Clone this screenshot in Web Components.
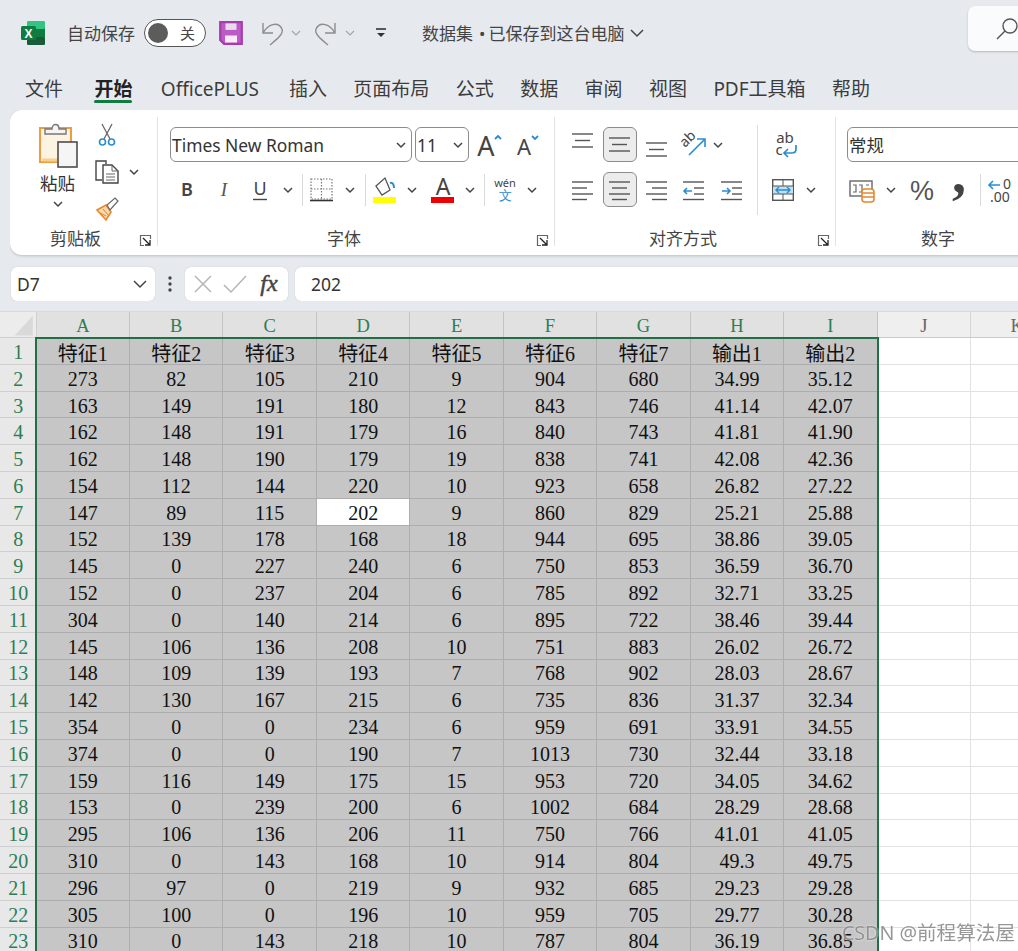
<!DOCTYPE html>
<html lang="zh">
<head>
<meta charset="utf-8">
<title>数据集</title>
<style>
  html, body { margin: 0; height: 951px; overflow: hidden; background: #e6eaee; }
  body { font-family: "Noto Sans", "Noto Sans CJK SC", sans-serif; color: #333; }
</style>
</head>
<body>
<xl-titlebar></xl-titlebar>
<xl-tabs></xl-tabs>
<xl-ribbon></xl-ribbon>
<xl-formula name="D7" value="202"></xl-formula>
<xl-sheet></xl-sheet>
<xl-watermark>CSDN @前程算法屋</xl-watermark>

<script>
const UI = `"Noto Sans", "Noto Sans CJK SC", sans-serif`;
const BLUE = '#2b8ccf';
const svg = (w, h, inner) => `<svg width="${w}" height="${h}" viewBox="0 0 ${w} ${h}" fill="none" stroke="#555" stroke-width="1.4" style="display:block;overflow:visible">${inner}</svg>`;
const hl = (x1, x2, y, c) => `<path d="M${x1} ${y}H${x2}" ${c ? `stroke="${c}"` : ''}/>`;
const txt = (x, y, size, s, extra = '') => `<text x="${x}" y="${y}" font-size="${size}" text-anchor="middle" fill="#444" stroke="none" font-family='"Noto Sans", sans-serif' ${extra}>${s}</text>`;

// 功能区里用到的图标
const ICONS = {
  chev: () => svg(10, 6, `<path d="M1 1l4 4 4-4" stroke="#444" stroke-width="1.5"/>`),
  chevL: () => svg(10, 6, `<path d="M1 1l4 4 4-4" stroke="#a5a5a5" stroke-width="1.2"/>`),
  logo: () => svg(24, 24, `<g stroke="none"><rect x="6" y="0" width="18" height="24" rx="2" fill="#21a366"/><rect x="6" y="0" width="18" height="8" rx="2" fill="#33c481"/><rect x="15" y="8" width="9" height="8" fill="#107c41"/><rect x="6" y="16" width="18" height="8" rx="1.5" fill="#185c37"/><rect x="0" y="5" width="15" height="14" rx="1.5" fill="#107c41"/></g>
    <text x="7.5" y="16.5" font-size="12" font-weight="700" text-anchor="middle" fill="#fff" stroke="none" font-family="Liberation Sans, sans-serif">X</text>`),
  save: () => svg(24, 24, `<path d="M1.2 1.2H22.8V22.8H5L1.2 19Z" fill="#bb5cc4" stroke="#a63cb0" stroke-width="2.2"/>
    <rect x="6.5" y="2.4" width="11" height="6.5" fill="#e9dcec" stroke="none"/>
    <rect x="6" y="14.5" width="12" height="7" fill="#fbeafb" stroke="none"/>`),
  undo: () => svg(24, 24, `<path d="M3 2V12H13M3 12C8 3 18 0 22 8C24 13 16 19 10 24" stroke="#8c8c8c" stroke-width="1.4"/>`),
  redo: () => svg(24, 24, `<path d="M21 2V12H11M21 12C16 3 6 0 2 8C0 13 8 19 14 24" stroke="#8c8c8c" stroke-width="1.4"/>`),
  custom: () => svg(10, 10, `<path d="M0 1H10" stroke="#333" stroke-width="1.6"/><path d="M1 5H9L5 9Z" fill="#333" stroke="none"/>`),
  search: () => svg(22, 24, `<circle cx="14" cy="9" r="7" stroke="#555"/><path d="M9 14L1 22" stroke="#555"/>`),
  paste: () => svg(42, 44, `<path d="M3 6H34V40H3Z" fill="#fdf3e3" stroke="#ef9d3c" stroke-width="2"/><path d="M5 38H32" stroke="#f8cf93" stroke-width="3"/>
    <path d="M8 12V7H15C15 1 22 1 22 7H29V12Z" fill="#f4f4f4" stroke="#777" stroke-width="1.4"/>
    <rect x="21" y="20" width="19" height="25" fill="#f5f5f5" stroke="#4d4d4d" stroke-width="1.6"/>`),
  cut: () => svg(18, 24, `<path d="M4 1L12 16M14 1L6 16" stroke="#666" stroke-width="1.3"/><circle cx="4.5" cy="19" r="3" stroke="${BLUE}" stroke-width="1.6"/><circle cx="13.5" cy="19" r="3" stroke="${BLUE}" stroke-width="1.6"/>`),
  copy: () => svg(24, 24, `<path d="M7 20H1V1H11V4" stroke="#444"/><path d="M8 5H17L23 11V23H8Z" fill="#fff" stroke="#444"/><path d="M17 5V11H23M11 14H20M11 17H20M11 20H20" stroke="#666" stroke-width="1"/>`),
  brush: () => svg(24, 24, `<path d="M2 13L11 8L16 15L11 23Z" fill="#f6d7ae" stroke="#e8872c" stroke-width="1.6"/><path d="M5 16L11 19M8 12L13 18" stroke="#e8872c" stroke-width="1"/><path d="M12 8L15 13L23 4L20 1Z" fill="#fff" stroke="#666" stroke-width="1.2"/>`),
  launcher: () => svg(11, 11, `<path d="M10.5 4V.5H.5V10.5H4" stroke="#666" stroke-width="1.2"/><path d="M3 3L10 10M10 5V10H5" stroke="#222" stroke-width="1.3"/>`),
  grow: () => svg(26, 26, txt(10, 24, 27, 'A') + `<path d="M19 7L22 4 25 7" stroke="${BLUE}" stroke-width="1.8"/>`),
  shrink: () => svg(24, 22, txt(9, 21, 22, 'A') + `<path d="M17 2L20 5 23 2" stroke="${BLUE}" stroke-width="1.8"/>`),
  bold: () => svg(14, 20, txt(7, 16, 18, 'B', 'font-weight="600"')),
  ital: () => svg(14, 20, `<text x="7" y="16" font-size="19" text-anchor="middle" fill="#555" stroke="none" font-style="italic" font-family="Liberation Serif, serif">I</text>`),
  under: () => svg(16, 22, txt(8, 16, 18, 'U') + hl(1, 15, 20.5, '#444')),
  borders: () => svg(24, 24, `<rect x="1" y="1" width="21" height="20" stroke="#777" stroke-dasharray="1.5 1.5" stroke-width="1.2"/><path d="M11.5 1V21M1 11H22" stroke="#777" stroke-dasharray="1.5 1.5" stroke-width="1.2"/><path d="M0 22.5H23" stroke="#333" stroke-width="1.6"/>`),
  fill: () => svg(24, 26, `<path d="M4 10L13 2L18 14L10 19Z" fill="#fff" stroke="#555" stroke-width="1.3" transform="translate(-1 -1)"/><path d="M17 6C20 5 21 8 21 11" stroke="${BLUE}" stroke-width="2"/><rect x="0" y="20" width="23" height="6" fill="#ffff00" stroke="none"/>`),
  color: () => svg(24, 26, txt(12, 18, 23, 'A') + `<rect x="0" y="20" width="23" height="6" fill="#f00000" stroke="none"/>`),
  wen: () => svg(24, 26, txt(12, 10, 11, 'wén', 'fill="#666"') + txt(12, 23, 13, '文', `style="fill:${BLUE}"`)),
  vtop: () => svg(22, 35, hl(0, 21, 7) + hl(3, 18, 13.5) + hl(0, 21, 20)),
  vmid: () => svg(22, 35, hl(0, 21, 11) + hl(3, 18, 17.5) + hl(0, 21, 24)),
  vbot: () => svg(22, 35, hl(0, 21, 16) + hl(3, 18, 22.5) + hl(0, 21, 29)),
  left: () => svg(22, 20, hl(0, 21, 2) + hl(0, 15, 8) + hl(0, 21, 14) + hl(0, 15, 19.5)),
  center: () => svg(22, 20, hl(0, 21, 2) + hl(3, 18, 8) + hl(0, 21, 14) + hl(3, 18, 19.5)),
  right: () => svg(22, 20, hl(0, 21, 2) + hl(6, 21, 8) + hl(0, 21, 14) + hl(6, 21, 19.5)),
  outdent: () => svg(22, 20, hl(0, 21, 2) + hl(11, 21, 8) + hl(11, 21, 14) + hl(0, 21, 19.5) + `<path d="M9 11H1M4 8L1 11 4 14" stroke="${BLUE}" stroke-width="1.6"/>`),
  indent: () => svg(22, 20, hl(0, 21, 2) + hl(11, 21, 8) + hl(11, 21, 14) + hl(0, 21, 19.5) + `<path d="M1 11H9M6 8L9 11 6 14" stroke="${BLUE}" stroke-width="1.6"/>`),
  orient: () => svg(24, 24, `<text x="0" y="0" font-size="14" fill="#444" stroke="none" font-family='"Noto Sans", sans-serif' transform="translate(3 15) rotate(-45)">ab</text><path d="M7 22L22 7M15 6H23V14" stroke="${BLUE}" stroke-width="1.6"/>`),
  wrap: () => svg(24, 26, txt(12, 11, 15, 'ab') + txt(6, 23, 15, 'c') + `<path d="M23 13V17C23 20 21 21 19 21H11M15 17L11 21 15 25" stroke="${BLUE}" stroke-width="1.7"/>`),
  merge: () => svg(22, 22, `<rect x=".7" y=".7" width="20.6" height="20.6" fill="#fff" stroke="#555"/><rect x="1" y="7" width="20" height="8" fill="#bfe0f5" stroke="none"/><path d="M1 7H21M1 15H21M11 1V7M11 15V21" stroke="#555" stroke-width="1"/><path d="M4 11H18M7 8L4 11 7 14M15 8L18 11 15 14" stroke="${BLUE}" stroke-width="1.4"/>`),
  account: () => svg(26, 24, `<rect x="1" y="3" width="22" height="15" fill="#fff" stroke="#666" stroke-width="1.4"/><path d="M4 7H7V14H4M10 7H13V14H10M17 7H20" stroke="#666" stroke-width="1.2"/><rect x="13" y="11" width="12" height="13" rx="3" fill="#fff" stroke="#e8872c" stroke-width="1.6"/><path d="M13 15H25M13 19H25" stroke="#e8872c" stroke-width="1.4"/>`),
  percent: () => svg(24, 24, `<text x="12" y="22" font-size="27" text-anchor="middle" fill="#555" stroke="none" font-family="Liberation Sans, sans-serif">%</text>`),
  comma: () => svg(14, 24, `<text x="7" y="14" font-size="56" font-weight="700" text-anchor="middle" fill="#444" stroke="none" font-family="Liberation Serif, serif">,</text>`),
  decimal: () => svg(24, 26, `<path d="M12 8H1M5 4L1 8 5 12" stroke="${BLUE}" stroke-width="1.6"/>` + txt(19, 12, 14, '0') + txt(12, 25, 14, '.00')),
  x: () => svg(20, 20, `<path d="M2 2L18 18M18 2L2 18" stroke="#b5b5b5" stroke-width="1.5"/>`),
  check: () => svg(24, 20, `<path d="M1 11L8 18L23 2" stroke="#b5b5b5" stroke-width="1.5"/>`),
  fx: () => svg(24, 26, `<text x="12" y="20" font-size="24" font-style="italic" text-anchor="middle" fill="#444" stroke="#444" stroke-width=".5" font-family="Liberation Serif, serif">fx</text>`),
  dots: () => svg(4, 16, `<g fill="#444" stroke="none"><circle cx="2" cy="2" r="1.7"/><circle cx="2" cy="8" r="1.7"/><circle cx="2" cy="14" r="1.7"/></g>`),
  big: () => svg(14, 8, `<path d="M1 1l6 6 6-6" stroke="#444" stroke-width="1.5"/>`),
};

class XlTool extends HTMLElement {
  constructor() {
    super();
    this.attachShadow({ mode: 'open' });
  }
  connectedCallback() {
    const w = this.getAttribute('w') || '30';
    const h = this.getAttribute('h') || '35';
    const icon = this.getAttribute('icon');
    this.shadowRoot.innerHTML = `
      <style>
        :host { display: flex; flex: none; align-items: center; justify-content: center; width: ${w}px; height: ${h}px; box-sizing: border-box; }
        :host([active]) { background: #ececec; border: 1px solid #8c8c8c; border-radius: 6px; }
      </style>
      ${icon ? ICONS[icon]() : ''}<slot></slot>`;
  }
}
customElements.define('xl-tool', XlTool);

class XlCombo extends HTMLElement {
  constructor() {
    super();
    this.attachShadow({ mode: 'open' });
  }
  connectedCallback() {
    const w = this.getAttribute('w');
    this.shadowRoot.innerHTML = `
      <style>
        :host { display: flex; flex: none; align-items: center; justify-content: space-between; width: ${w}px; height: 35px; box-sizing: border-box;
          border: 1px solid #8c8c8c; border-radius: 6px; padding: 0 5px 0 1px; font: 17.4px ${UI}; color: #333; background: #fff; }
      </style>
      <slot></slot>${ICONS.chev()}`;
  }
}
customElements.define('xl-combo', XlCombo);

class XlGroup extends HTMLElement {
  constructor() {
    super();
    this.attachShadow({ mode: 'open' });
  }
  connectedCallback() {
    const launcher = this.hasAttribute('launcher');
    const lr = this.getAttribute('lr') || '24';
    this.shadowRoot.innerHTML = `
      <style>
        :host { display: flex; flex: none; flex-direction: column; position: relative; height: 129px; box-sizing: border-box; border-right: 1px solid #e2e2e2; }
        .body { flex: 1; min-height: 0; }
        .label { height: 20px; margin: 0 ${lr}px -3px 0; text-align: center; font: 17px/20px ${UI}; color: #444; }
        .launch { position: absolute; right: 6px; bottom: 0; }
      </style>
      <div class="body"><slot></slot></div>
      <div class="label">${this.getAttribute('label')}</div>
      ${launcher ? `<div class="launch">${ICONS.launcher()}</div>` : ''}`;
  }
}
customElements.define('xl-group', XlGroup);

class XlTitlebar extends HTMLElement {
  constructor() {
    super();
    this.attachShadow({ mode: 'open' });
  }
  connectedCallback() {
    this.shadowRoot.innerHTML = `
      <style>
        :host { display: flex; align-items: center; height: 65px; padding-left: 21px; font: 17px ${UI}; color: #444; overflow: hidden; }
        .auto { margin-left: 22px; width: 77px; white-space: nowrap; }
        .toggle { flex: none; display: flex; align-items: center; justify-content: space-between; width: 62px; height: 28px; box-sizing: border-box; border: 1px solid #555; border-radius: 14px; background: #fff; padding: 0 10px 0 3px; font-size: 15px; }
        .toggle i { width: 20px; height: 20px; border-radius: 50%; background: #5c5c5c; }
        .save { margin-left: 13px; flex: none; }
        .ic { flex: none; display: flex; align-items: center; }
        .name { margin-left: 36px; white-space: nowrap; }
        .dot { margin: 0 3px 0 6px; }
        .search { flex: none; margin: -9px -20px 0 auto; width: 70px; height: 45px; box-sizing: border-box; background: #fafbfc; border-radius: 7px; box-shadow: 0 1px 2px rgba(0,0,0,.22); padding: 11px 0 0 28px; }
      </style>
      ${ICONS.logo()}
      <span class="auto">自动保存</span>
      <span class="toggle"><i></i>关</span>
      <span class="save">${ICONS.save()}</span>
      <span class="ic" style="margin-left:17px;gap:7px">${ICONS.undo()}${ICONS.chevL()}</span>
      <span class="ic" style="margin-left:13px;gap:7px">${ICONS.redo()}${ICONS.chevL()}</span>
      <span class="ic" style="margin-left:21px">${ICONS.custom()}</span>
      <span class="name">数据集<span class="dot">•</span>已保存到这台电脑</span>
      <span class="ic" style="margin-left:6px">${ICONS.big()}</span>
      <span class="search">${ICONS.search()}</span>`;
  }
}
customElements.define('xl-titlebar', XlTitlebar);

class XlTabs extends HTMLElement {
  constructor() {
    super();
    this.attachShadow({ mode: 'open' });
  }
  connectedCallback() {
    const tabs = ['文件', '开始', 'OfficePLUS', '插入', '页面布局', '公式', '数据', '审阅', '视图', 'PDF工具箱', '帮助'];
    this.shadowRoot.innerHTML = `
      <style>
        :host { display: flex; height: 45px; padding-left: 25px; gap: 26.4px; font: 19px ${UI}; color: #3c3c3c; white-space: nowrap; }
        span { height: 34px; padding-top: 9px; line-height: 30px; box-sizing: border-box; position: relative; }
        span.on { font-weight: 700; color: #222; margin-left: 5px; margin-right: 2px; }
        span.on::after { content: ''; position: absolute; left: 0; right: 0; bottom: -4px; height: 3px; background: #107c41; border-radius: 2px; }
        span.wide { margin-right: 3.5px; }
      </style>
      ${tabs.map(t => `<span class="${t === '开始' ? 'on' : t === 'OfficePLUS' ? 'wide' : ''}">${t}</span>`).join('')}`;
  }
}
customElements.define('xl-tabs', XlTabs);

class XlRibbon extends HTMLElement {
  constructor() {
    super();
    this.attachShadow({ mode: 'open' });
  }
  connectedCallback() {
    const tool = (icon, w, attrs = '') => `<xl-tool icon="${icon}" w="${w}" ${attrs}></xl-tool>`;
    const sep = (w, h = 32) => `<span class="sep" style="width:${w}px"><i style="height:${h}px"></i></span>`;
    this.shadowRoot.innerHTML = `
      <style>
        :host { display: block; overflow: hidden; margin-left: 10px; height: 148px; padding-bottom: 0; }
        .card { display: flex; width: 1100px; height: 145px; box-sizing: border-box; padding-top: 7px; background: #fff; border-radius: 12px; box-shadow: 0 1px 3px rgba(0,0,0,.18); }
        .pad { padding: 10px 0 0 12px; display: flex; flex-direction: column; gap: 10px; }
        .row { display: flex; align-items: center; height: 35px; }
        .sep { display: flex; flex: none; justify-content: center; }
        .sep i { width: 1px; background: #d9d9d9; }
        .clip { display: flex; padding-left: 19px; }
        .paste { width: 57px; display: flex; flex-direction: column; align-items: center; padding-top: 5px; font: 17.5px/24px ${UI}; color: #333; }
        .paste svg + span { margin-top: 5px; }
        .paste div { margin-top: 6px; }
        .tools { margin-top: -1px; }
        .tools .row { height: 37px; }
        .vsep { flex: none; width: 1px; height: 90px; margin: 8px 0 0 4px; background: #dcdcdc; }
      </style>
      <div class="card">
        <xl-group label="剪贴板" lr="16" launcher style="width:148px">
          <div class="clip">
            <div class="paste">${ICONS.paste()}<span>粘贴</span><div>${ICONS.chev()}</div></div>
            <div class="tools">
              <div class="row">${tool('cut', 42)}</div>
              <div class="row">${tool('copy', 42)}${tool('chev', 12)}</div>
              <div class="row">${tool('brush', 42)}</div>
            </div>
          </div>
        </xl-group>
        <xl-group label="字体" launcher style="width:397px">
          <div class="pad">
            <div class="row">
              <xl-combo w="242">Times New Roman</xl-combo>
              <xl-combo w="54" style="margin-left:3px">11</xl-combo>
              ${tool('grow', 40)}${tool('shrink', 36)}
            </div>
            <div class="row">
              ${tool('bold', 34)}${tool('ital', 40)}${tool('under', 32)}${tool('chev', 24)}${sep(4)}
              ${tool('borders', 36)}${tool('chev', 20)}${sep(10)}
              ${tool('fill', 30)}${tool('chev', 24)}${tool('color', 38)}${tool('chev', 16)}${sep(12)}
              ${tool('wen', 30)}${tool('chev', 24)}
            </div>
          </div>
        </xl-group>
        <xl-group label="对齐方式" launcher style="width:281px">
          <div style="display:flex">
            <div class="pad">
              <div class="row">
                ${tool('vtop', 32)}${tool('vmid', 34, 'active style="margin-left:4px"')}${tool('vbot', 40)}${tool('orient', 34)}${tool('chev', 14)}
              </div>
              <div class="row">
                ${tool('left', 32)}${tool('center', 34, 'active style="margin-left:4px"')}${tool('right', 40)}${tool('outdent', 34)}${tool('indent', 42)}
              </div>
            </div>
            <div class="vsep"></div>
            <div class="pad" style="padding-left:3px">
              <div class="row">${tool('wrap', 48)}</div>
              <div class="row">${tool('merge', 44)}${tool('chev', 12)}</div>
            </div>
          </div>
        </xl-group>
        <xl-group label="数字" style="width:228px;border:0">
          <div class="pad" style="padding-left:11px">
            <div class="row"><xl-combo w="210">常规</xl-combo></div>
            <div class="row">
              ${tool('account', 30)}${tool('chev', 28)}${tool('percent', 34)}${tool('comma', 40)}${sep(2)}${tool('decimal', 38)}
            </div>
          </div>
        </xl-group>
      </div>`;
  }
}
customElements.define('xl-ribbon', XlRibbon);

class XlFormula extends HTMLElement {
  constructor() {
    super();
    this.attachShadow({ mode: 'open' });
  }
  connectedCallback() {
    this.shadowRoot.innerHTML = `
      <style>
        :host { display: flex; align-items: center; height: 35px; margin-top: 8px; padding-left: 11px; font: 17.5px ${UI}; color: #333; overflow: hidden; }
        .box { flex: none; display: flex; align-items: center; height: 34px; box-sizing: border-box; background: #fff; border-radius: 6px; box-shadow: 0 0 1px rgba(0,0,0,.25); }
        .name { width: 144px; justify-content: space-between; padding: 0 8px 0 6px; }
        .dots { flex: none; width: 30px; display: flex; justify-content: center; }
        .fx { width: 103px; padding: 0 7px 0 8px; justify-content: space-between; }
        .val { flex: none; width: 800px; margin-left: 7px; padding-left: 16px; }
      </style>
      <div class="box name">${this.getAttribute('name')}${ICONS.big()}</div>
      <div class="dots">${ICONS.dots()}</div>
      <div class="box fx">${ICONS.x()}${ICONS.check()}${ICONS.fx()}</div>
      <div class="box val">${this.getAttribute('value')}</div>`;
  }
}
customElements.define('xl-formula', XlFormula);

const DATA = `特征1 特征2 特征3 特征4 特征5 特征6 特征7 输出1 输出2
273 82 105 210 9 904 680 34.99 35.12
163 149 191 180 12 843 746 41.14 42.07
162 148 191 179 16 840 743 41.81 41.90
162 148 190 179 19 838 741 42.08 42.36
154 112 144 220 10 923 658 26.82 27.22
147 89 115 202 9 860 829 25.21 25.88
152 139 178 168 18 944 695 38.86 39.05
145 0 227 240 6 750 853 36.59 36.70
152 0 237 204 6 785 892 32.71 33.25
304 0 140 214 6 895 722 38.46 39.44
145 106 136 208 10 751 883 26.02 26.72
148 109 139 193 7 768 902 28.03 28.67
142 130 167 215 6 735 836 31.37 32.34
354 0 0 234 6 959 691 33.91 34.55
374 0 0 190 7 1013 730 32.44 33.18
159 116 149 175 15 953 720 34.05 34.62
153 0 239 200 6 1002 684 28.29 28.68
295 106 136 206 11 750 766 41.01 41.05
310 0 143 168 10 914 804 49.3 49.75
296 97 0 219 9 932 685 29.23 29.28
305 100 0 196 10 959 705 29.77 30.28
310 0 143 218 10 787 804 36.19 36.85`.split('\n').map(r => r.split(' '));

class XlSheet extends HTMLElement {
  constructor() {
    super();
    this.attachShadow({ mode: 'open' });
  }
  connectedCallback() {
    const cols = 'ABCDEFGHIJK'.split('');
    let html = `<div class="corner"><i></i></div>`;
    cols.forEach((c, i) => { html += `<div class="head ${i < 9 ? 'sel' : ''}">${c}</div>`; });
    DATA.forEach((row, r) => {
      html += `<div class="rowh">${r + 1}</div>`;
      cols.forEach((c, i) => {
        const active = c === 'D' && r === 6;
        html += `<div class="cell ${i < 9 ? 'sel' : ''} ${active ? 'active' : ''}">${row[i] || ''}</div>`;
      });
    });
    this.shadowRoot.innerHTML = `
      <style>
        :host { display: block; height: 640px; margin-top: 10px; overflow: hidden; background: #fff; border-top: 1px solid #d8d8d8; box-sizing: border-box; }
        .grid { display: grid; grid-template-columns: 36.6px repeat(11, 93.45px); grid-template-rows: 26px repeat(23, 26.8px); position: relative; font: 20px "Liberation Serif", "Noto Sans CJK SC", serif; color: #111; }
        .grid > div { display: flex; align-items: center; justify-content: center; box-sizing: border-box; }
        .corner { background: #ececec; border-right: 1px solid #d0d0d0; border-bottom: 1px solid #d0d0d0; }
        .corner i { width: 18px; height: 20px; margin: 2px 0 0 12px; background: #d9d9d9; clip-path: polygon(100% 0, 100% 100%, 0 100%); }
        .head { background: #efefef; border-right: 1px solid #d4d4d4; border-bottom: 1px solid #c8c8c8; font-size: 18.5px; color: #666; padding-top: 4px; }
        .head.sel { background: #e1e1e1; color: #2e7d54; border-right-color: #c4c4c4; }
        .rowh { background: #e8e8e8; border-bottom: 1px solid #cfcfcf; color: #2e7d54; padding-top: 3px; }
        .cell { border-right: 1px solid #e2e2e2; border-bottom: 1px solid #e2e2e2; padding-top: 3px; }
        .cell.sel { background: #c6c6c6; border-color: #adadad; }
        .cell.active { background: #fff; }
        /* 选区外框盖在单元格上面 */
        .grid > .frame { position: absolute; grid-column: 2 / 11; grid-row: 2 / 25; top: -1px; left: -1.5px; right: -1px; bottom: 0; border: 2px solid #1f7145; pointer-events: none; }
      </style>
      <div class="grid">${html}<div class="frame"></div></div>`;
  }
}
customElements.define('xl-sheet', XlSheet);

class XlWatermark extends HTMLElement {
  constructor() {
    super();
    this.attachShadow({ mode: 'open' });
    this.shadowRoot.innerHTML = `
      <style>
        :host { display: block; position: fixed; right: 3px; top: 920px; font: 19.6px/26px ${UI}; color: rgba(125,125,125,.8); text-shadow: 0 0 2px rgba(255,255,255,.9); white-space: nowrap; }
      </style>
      <slot></slot>`;
  }
}
customElements.define('xl-watermark', XlWatermark);
</script>
</body>
</html>
